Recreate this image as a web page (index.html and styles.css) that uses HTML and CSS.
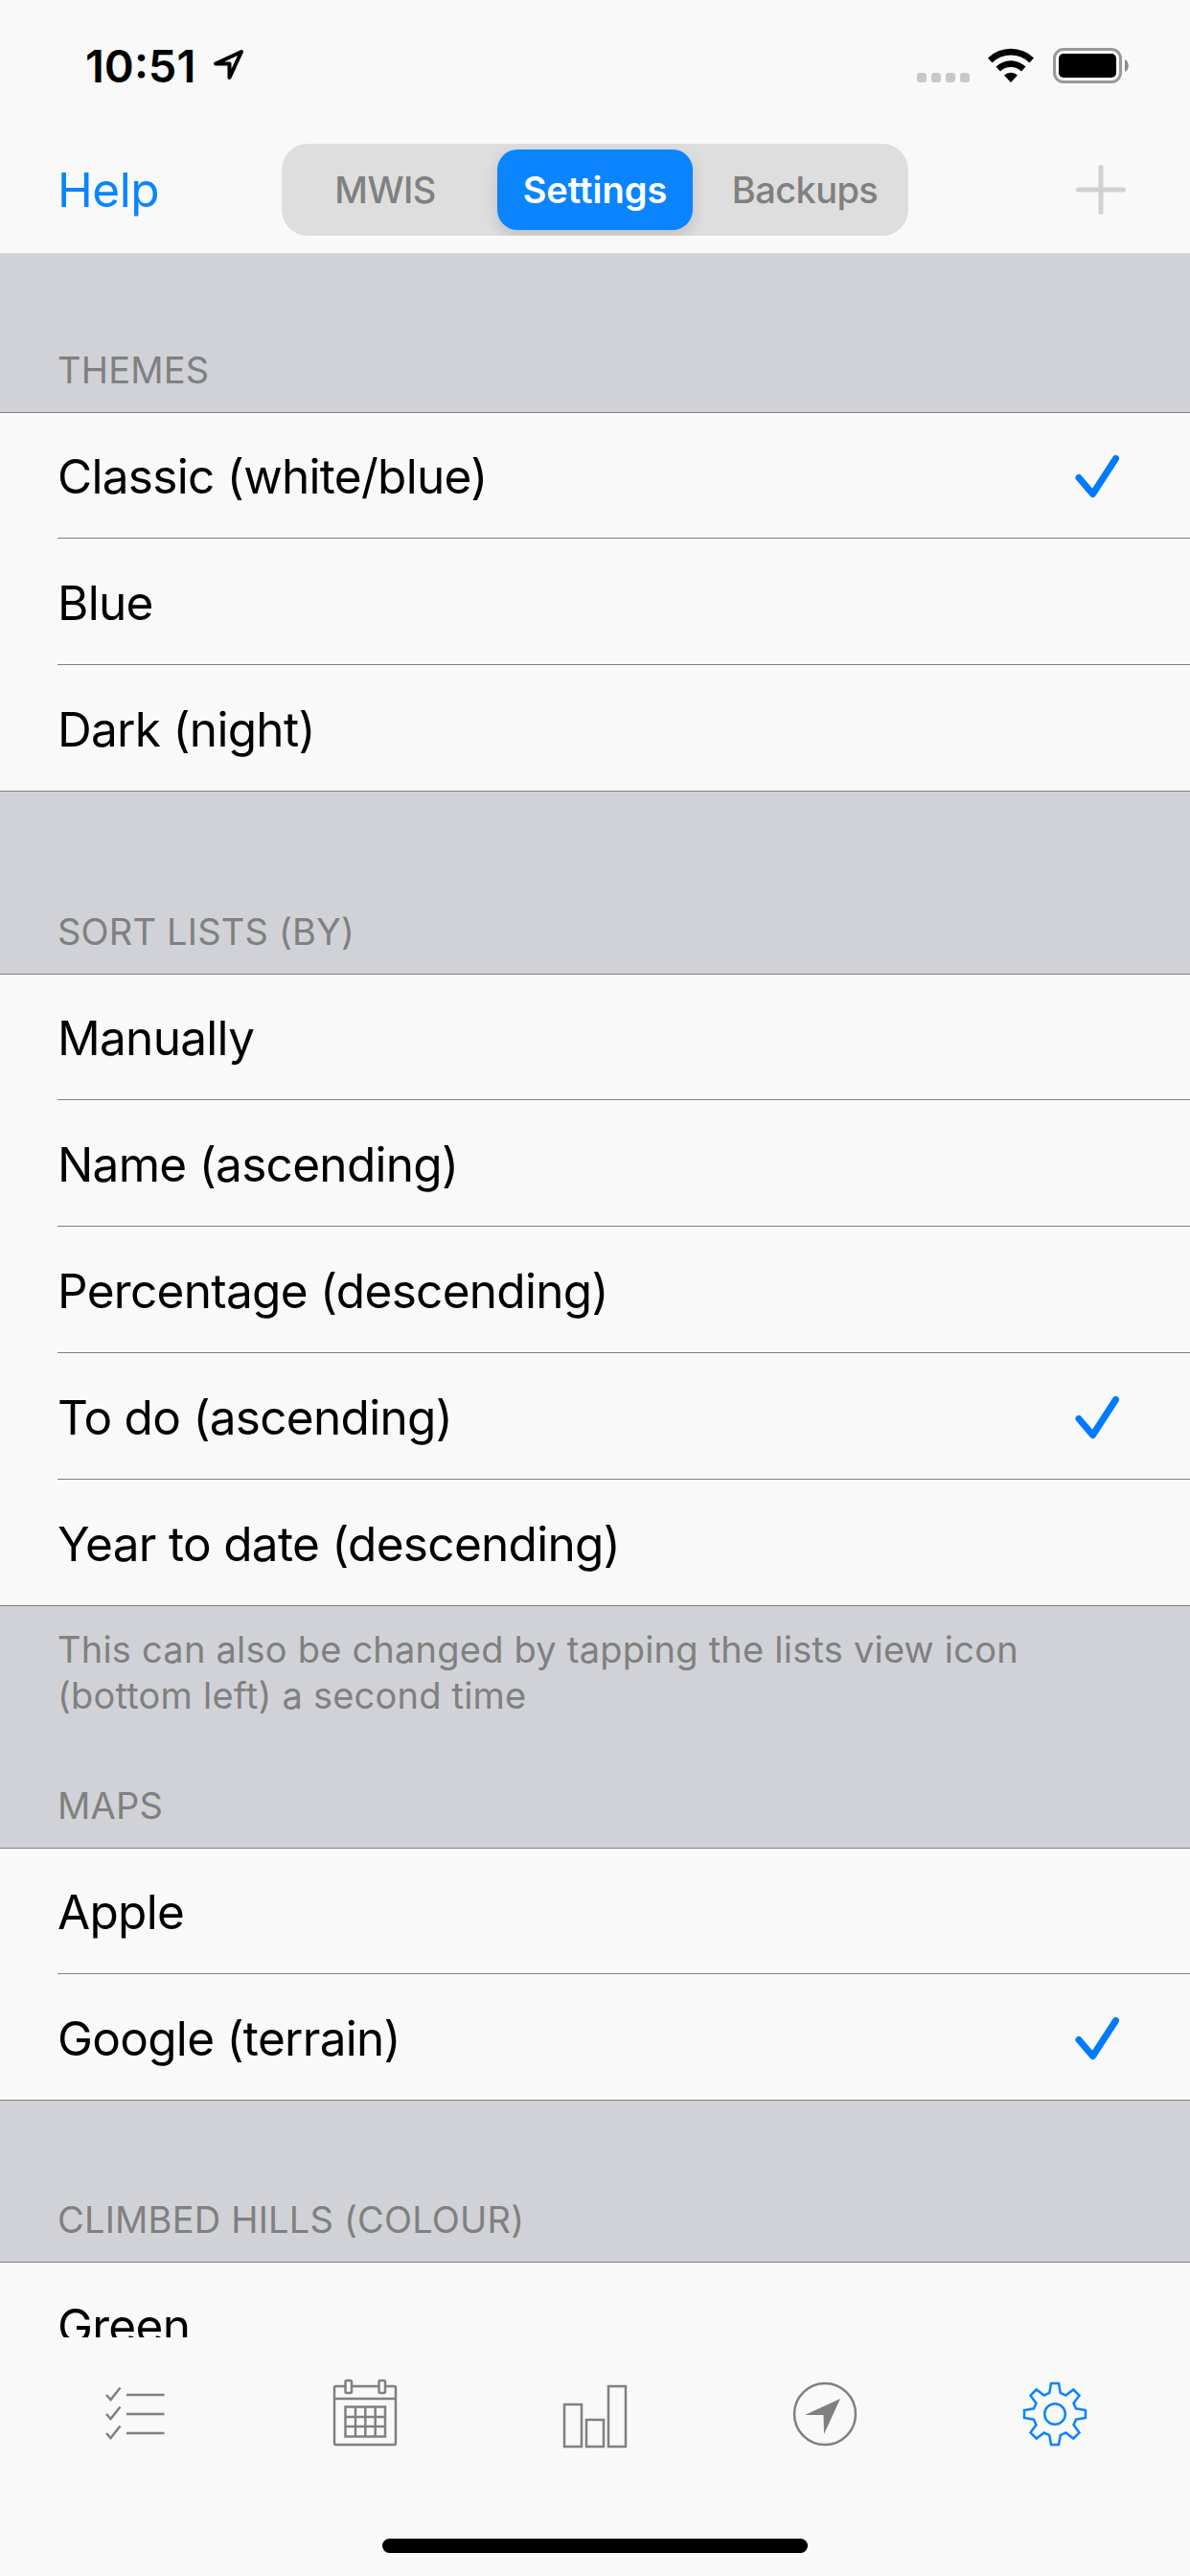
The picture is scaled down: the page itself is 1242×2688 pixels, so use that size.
FILE: index.html
```html
<!DOCTYPE html>
<html lang="en">
<head>
  <meta charset="UTF-8" />
  <meta name="viewport" content="width=device-width, initial-scale=1.0"/>
  <title>Settings</title>
  <link rel="stylesheet" href="styles.css">
</head>
<body>
  <svg class="defs" width="0" height="0">
    <symbol id="check" viewBox="0 0 46 46">
      <path d="M4 24.5L18.5 41.5L42.5 4.5" fill="none" stroke="currentColor" stroke-width="7" stroke-linecap="round" stroke-linejoin="round"/>
    </symbol>
  </svg>

  <div class="status-bar">
    <div class="clock">
      <span class="time">10:51</span>
      <svg class="location" width="33" height="34" viewBox="0 0 33 34">
        <path d="M30 3L3 15.5H17.5V30Z" fill="none" stroke="#000" stroke-width="4" stroke-linejoin="round"/>
      </svg>
    </div>
    <div class="indicators">
      <div class="signal"><i></i><i></i><i></i><i></i></div>
      <svg class="wifi" width="48" height="36" viewBox="0 0 48 36">
        <path d="M0 10.5A34.5 34.5 0 0 1 48 10.5L43.5 15.5A27.6 27.6 0 0 0 4.5 15.5Z"/>
        <path d="M8.5 19.5A22.5 22.5 0 0 1 39.5 19.5L35 24.5A15.8 15.8 0 0 0 13 24.5Z"/>
        <path d="M17 28.5A10.5 10.5 0 0 1 31 28.5L24 36Z"/>
      </svg>
      <svg class="battery" width="80" height="37" viewBox="0 0 80 37">
        <rect x="1.5" y="1.5" width="69" height="34" rx="9.5" fill="none" stroke="#999" stroke-width="3"/>
        <rect x="6" y="6" width="60" height="25" rx="5"/>
        <path d="M75 12C80 14 80 23 75 25Z" fill="#8a8a8a"/>
      </svg>
    </div>
  </div>

  <div class="nav">
    <a class="help" href="#">Help</a>
    <div class="segments">
      <div class="segment">MWIS</div>
      <div class="segment active">Settings</div>
      <div class="segment">Backups</div>
    </div>
    <svg class="add" width="52" height="52" viewBox="0 0 52 52">
      <path d="M26 2.5V49.5M2.5 26H49.5" stroke="#d1d1d1" stroke-width="5" stroke-linecap="round"/>
    </svg>
  </div>

  <div class="content">
    <div class="section-title first">THEMES</div>
    <div class="group">
      <div class="row"><span>Classic (white/blue)</span><svg class="tick"><use href="#check"/></svg></div>
      <div class="row"><span>Blue</span></div>
      <div class="row"><span>Dark (night)</span></div>
    </div>

    <div class="section-title">SORT LISTS (BY)</div>
    <div class="group">
      <div class="row"><span>Manually</span></div>
      <div class="row"><span>Name (ascending)</span></div>
      <div class="row"><span>Percentage (descending)</span></div>
      <div class="row"><span>To do (ascending)</span><svg class="tick"><use href="#check"/></svg></div>
      <div class="row"><span>Year to date (descending)</span></div>
    </div>
    <p class="note">This can also be changed by tapping the lists view icon<br/>(bottom left) a second time</p>

    <div class="section-title maps">MAPS</div>
    <div class="group">
      <div class="row"><span>Apple</span></div>
      <div class="row"><span>Google (terrain)</span><svg class="tick"><use href="#check"/></svg></div>
    </div>

    <div class="section-title colour">CLIMBED HILLS (COLOUR)</div>
    <div class="group">
      <div class="row"><span>Green</span></div>
      <div class="row"></div>
    </div>
  </div>

  <div class="footer">
    <div class="tabs">
      <svg class="tab" viewBox="0 0 80 80">
        <path d="M31 20H70.5M31 40H70.5M31 60H70.5"/>
        <path d="M10 20L14.5 25L24.5 12.5M10 40L14.5 45L24.5 32.5M10 60L14.5 65L24.5 52.5"/>
      </svg>
      <svg class="tab" viewBox="0 0 80 80">
        <path d="M19 11H9.5Q8 11 8 12.5V70.5Q8 72 9.5 72H70.5Q72 72 72 70.5V12.5Q72 11 70.5 11H61M26 11H54M8 24H72"/>
        <rect x="19.5" y="5" width="6.5" height="13" rx="1.5"/>
        <rect x="54.5" y="5" width="6.5" height="13" rx="1.5"/>
        <path d="M19.5 32.5H61V63.5H19.5ZM30 32.5V63.5M40.3 32.5V63.5M50.7 32.5V63.5M19.5 43H61M19.5 53H61"/>
      </svg>
      <svg class="tab" viewBox="0 0 80 80">
        <path d="M8 30H26V74H8ZM31 46H49V74H31ZM54 11H72V74H54Z"/>
      </svg>
      <svg class="tab" viewBox="0 0 80 80">
        <circle cx="40" cy="40" r="32"/>
        <path class="solid" d="M56 24L19 41H38.5L39 61Z"/>
      </svg>
      <svg class="tab current" viewBox="0 0 80 80">
        <path d="M36 8H44L45.7 18L51.3 20.5L59.3 14.5L65.5 20.7L59.5 28.7L62 34.3L72 36V44L62 45.7L59.5 51.3L65.5 59.3L59.3 65.5L51.3 59.5L45.7 62L44 72H36L34.3 62L28.7 59.5L20.7 65.5L14.5 59.3L20.5 51.3L18 45.7L8 44V36L18 34.3L20.5 28.7L14.5 20.7L20.7 14.5L28.7 20.5L34.3 18Z"/>
        <circle cx="40" cy="40" r="10.8"/>
      </svg>
    </div>
    <div class="home-bar"></div>
  </div>
</body>
</html>
```
FILE: styles.css
```css
* {
  box-sizing: border-box;
}

body {
  margin: 0;
  padding: 0;
  height: 2688px;
  overflow: hidden;
  font-family: Inter, 'Liberation Sans', sans-serif;
  background-color: #f9f9f9;
  color: #000;
  display: flex;
  flex-direction: column;
}

svg {
  display: block;
  flex: none;
}

.status-bar {
  height: 132px;
  padding: 4px 63px 0 89px;
  display: flex;
  align-items: center;
  justify-content: space-between;
}

.clock {
  display: flex;
  align-items: center;
  gap: 15px;
}

.time {
  width: 118px;
  font-size: 47px;
  font-weight: 600;
  white-space: nowrap;
}

.indicators {
  display: flex;
  align-items: flex-end;
}

.signal {
  display: flex;
  gap: 5px;
  margin: 0 19px 1px 0;
}

.signal i {
  width: 10px;
  height: 10px;
  border-radius: 3px;
  background-color: #c8c8c8;
}

.wifi {
  margin: 0 20px 1px 0;
}

.nav {
  height: 132px;
  padding: 0 67px 0 60px;
  display: flex;
  align-items: center;
}

.help {
  width: 234px;
  font-size: 49.5px;
  letter-spacing: -0.5px;
  color: #0a84ff;
  text-decoration: none;
}

.segments {
  width: 654px;
  height: 96px;
  padding: 6px;
  border-radius: 27px;
  background-color: #dededf;
  display: flex;
  justify-content: space-between;
  overflow: hidden;
}

.segment {
  width: 204px;
  display: flex;
  align-items: center;
  justify-content: center;
  font-size: 38px;
  font-weight: 500;
  letter-spacing: -0.6px;
  color: #808080;
}

.segment.active {
  border-radius: 21px;
  background-color: #0a84ff;
  box-shadow: 0 6px 16px rgba(0, 0, 0, 0.14);
  color: #fff;
  font-weight: 600;
  letter-spacing: 0;
}

.add {
  margin-left: auto;
}

.content {
  height: 2175px;
  overflow: hidden;
  background-color: #d1d2d7;
  border-top: 1px solid #d8d8db;
}

.section-title {
  height: 190px;
  padding: 0 60px 20px;
  display: flex;
  align-items: flex-end;
  font-size: 38px;
  line-height: 48px;
  letter-spacing: 0.2px;
  color: #808080;
}

.section-title.first {
  height: 165px;
}

.section-title.maps {
  height: 135px;
}

.section-title.colour {
  height: 168px;
}

.group {
  background-color: #f9f9f9;
  border-top: 1px solid #808080;
  border-bottom: 1px solid #808080;
}

.row {
  height: 132px;
  padding: 2px 74px 0 0;
  margin-left: 60px;
  display: flex;
  align-items: center;
  justify-content: space-between;
  border-bottom: 1px solid #808080;
  font-size: 49.5px;
  letter-spacing: -0.7px;
}

.row:first-child {
  height: 131px;
}

.row:last-child {
  height: 131px;
  border-bottom: none;
}

.tick {
  width: 46px;
  height: 46px;
  color: #007aff;
}

.note {
  height: 117px;
  margin: 0;
  padding: 21px 60px 0;
  font-size: 38px;
  line-height: 48px;
  letter-spacing: 0.22px;
  color: #808080;
}

.footer {
  height: 249px;
  padding-top: 40px;
  display: flex;
  flex-direction: column;
  align-items: center;
}

.tabs {
  width: 1040px;
  display: flex;
  justify-content: space-between;
}

.tab {
  width: 80px;
  height: 80px;
  fill: none;
  stroke: #808080;
  stroke-width: 2.5;
}

.tab.current {
  stroke: #0a84ff;
}

.tab .solid {
  fill: #808080;
  stroke: none;
}

.home-bar {
  width: 444px;
  height: 15px;
  margin-top: 90px;
  border-radius: 8px;
  background-color: #000;
}
```
